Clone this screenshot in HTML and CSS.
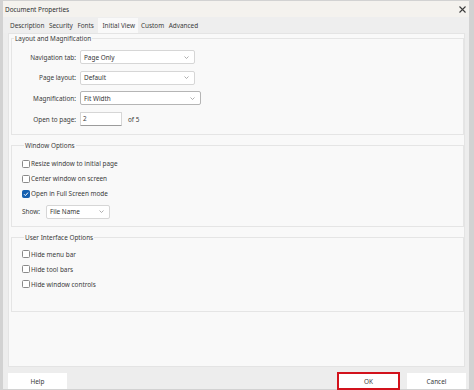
FILE: index.html
```html
<!DOCTYPE html>
<html lang="en">
<head>
    <meta charset="UTF-8">
    <meta name="viewport" content="width=device-width, initial-scale=1.0">
    <title>Document Properties</title>
    <link rel="stylesheet" href="styles.css">
</head>
<body>

<div class="dialog">
    <div class="titlebar">
        <span class="title">Document Properties</span>
        <svg class="close" width="7" height="7" viewBox="0 0 7 7"><path d="M0.5 0.5 L6.5 6.5 M6.5 0.5 L0.5 6.5" stroke="#3c3c3c" stroke-width="1.1"/></svg>
    </div>

    <div class="tabs">
        <span class="tab">Description</span>
        <span class="tab">Security</span>
        <span class="tab">Fonts</span>
        <span class="tab active">Initial View</span>
        <span class="tab">Custom</span>
        <span class="tab">Advanced</span>
    </div>

    <div class="panel">
        <fieldset class="group layout-group">
            <legend>Layout and Magnification</legend>
            <div class="form-grid">
                <label>Navigation tab:</label>
                <div class="select">Page Only<svg class="chevron" width="5" height="3" viewBox="0 0 5 3"><path d="M0.5 0.5 L2.5 2.5 L4.5 0.5" fill="none" stroke="#9a9a9a" stroke-width="0.8"/></svg></div>

                <label>Page layout:</label>
                <div class="select">Default<svg class="chevron" width="5" height="3" viewBox="0 0 5 3"><path d="M0.5 0.5 L2.5 2.5 L4.5 0.5" fill="none" stroke="#9a9a9a" stroke-width="0.8"/></svg></div>

                <label>Magnification:</label>
                <div class="select wide focused">Fit Width<svg class="chevron" width="5" height="3" viewBox="0 0 5 3"><path d="M0.5 0.5 L2.5 2.5 L4.5 0.5" fill="none" stroke="#9a9a9a" stroke-width="0.8"/></svg></div>

                <label>Open to page:</label>
                <div class="page-field">
                    <div class="text-input">2</div>
                    <span>of 5</span>
                </div>
            </div>
        </fieldset>

        <fieldset class="group window-group">
            <legend>Window Options</legend>
            <div class="check-row"><span class="checkbox"></span>Resize window to initial page</div>
            <div class="check-row"><span class="checkbox"></span>Center window on screen</div>
            <div class="check-row"><span class="checkbox checked"><svg width="8" height="8" viewBox="0 0 8 8"><path d="M2 4.2 L3.4 5.6 L6 2.6" fill="none" stroke="#fff" stroke-width="1"/></svg></span>Open in Full Screen mode</div>
            <div class="show-row">
                <label>Show:</label>
                <div class="select short">File Name<svg class="chevron" width="5" height="3" viewBox="0 0 5 3"><path d="M0.5 0.5 L2.5 2.5 L4.5 0.5" fill="none" stroke="#9a9a9a" stroke-width="0.8"/></svg></div>
            </div>
        </fieldset>

        <fieldset class="group ui-group">
            <legend>User Interface Options</legend>
            <div class="check-row"><span class="checkbox"></span>Hide menu bar</div>
            <div class="check-row"><span class="checkbox"></span>Hide tool bars</div>
            <div class="check-row"><span class="checkbox"></span>Hide window controls</div>
        </fieldset>
    </div>

    <div class="button-bar">
        <button class="btn">Help</button>
        <div class="spacer"></div>
        <button class="btn ok">OK</button>
        <button class="btn">Cancel</button>
    </div>
</div>

</body>
</html>
```

FILE: styles.css
```css
* {
    box-sizing: border-box;
}
body {
    margin: 0;
    padding: 1px 5px 1px 3px;
    background: #d2d2d2;
    font-family: "Noto Sans", Arial, sans-serif;
    font-size: 6.4px;
    color: #3a3a3a;
}
.dialog {
    width: 466px;
    height: 388px;
    background: #ededed;
    display: flex;
    flex-direction: column;
}
.titlebar {
    height: 16px;
    background: #f4f2ee;
    display: flex;
    align-items: center;
    justify-content: space-between;
    padding: 0 3px 0 2px;
}
.title {
    color: #2e2e2e;
}
.tabs {
    height: 16px;
    display: flex;
    align-items: stretch;
    padding-left: 5px;
    background: #eeeeee;
}
.tab {
    display: flex;
    align-items: center;
    padding: 0 2px;
    margin-right: 0.5px;
}
.tab.active {
    background: #f9f9f9;
    margin: 1px 1px 0 2px;
    padding: 0 3px 0 4px;
}
.panel {
    height: 334px;
    margin: 0 4px 0 5px;
    background: #f9f9f9;
    border: 1px solid #e4e4e4;
}
.group {
    margin: 0 0 0 2px;
    border: 1px solid #e5e5e5;
    padding: 0;
    min-width: 0;
}
.group legend {
    margin-left: 2px;
    padding: 0 1px;
    line-height: 9px;
}
.layout-group {
    padding: 7px 8px 8px 0;
}
.window-group {
    margin-top: 6px;
    padding: 6px 0 7px 10px;
}
.ui-group {
    margin-top: 6px;
    padding: 5px 0 19px 10px;
}
.form-grid {
    display: grid;
    grid-template-columns: 64px auto;
    column-gap: 4px;
    row-gap: 6.7px;
    align-items: center;
}
.form-grid label {
    text-align: right;
}
.select {
    width: 115px;
    height: 14px;
    background: #ffffff;
    border: 1px solid #d6d6d6;
    border-radius: 2px;
    display: flex;
    align-items: center;
    justify-content: space-between;
    padding: 0 5px 0 3px;
    color: #333;
}
.select.wide {
    width: 121px;
}
.select.focused {
    border-color: #b5b5b5;
}
.select.short {
    width: 64px;
}
.page-field {
    display: flex;
    align-items: center;
    gap: 6px;
}
.text-input {
    width: 42px;
    height: 14px;
    background: #ffffff;
    border: 1px solid #d6d6d6;
    border-bottom-color: #9c9c9c;
    border-radius: 1px;
    padding-left: 2px;
    line-height: 12px;
}
.check-row {
    height: 15px;
    display: flex;
    align-items: center;
    gap: 1px;
}
.checkbox {
    width: 8px;
    height: 8px;
    border: 1px solid #8a8a8a;
    border-radius: 1.5px;
    background: #fff;
    display: flex;
}
.checkbox.checked {
    background: #1560b0;
    border-color: #1560b0;
}
.checkbox.checked svg {
    margin: -1px;
}
.show-row {
    margin-top: 3.5px;
    display: flex;
    align-items: center;
    gap: 6px;
}
.button-bar {
    flex: 1;
    display: flex;
    align-items: flex-end;
    padding: 0 3px 0 5px;
    gap: 7px;
}
.spacer {
    flex: 1;
}
.btn {
    height: 16px;
    width: 59px;
    border: none;
    background: #ffffff;
    font-family: inherit;
    font-size: 6.4px;
    color: #3a3a3a;
    padding: 0;
}
.btn.ok {
    width: 63px;
    height: 18px;
    margin-bottom: -1px;
    border: 2.5px solid #d2121c;
}
```
